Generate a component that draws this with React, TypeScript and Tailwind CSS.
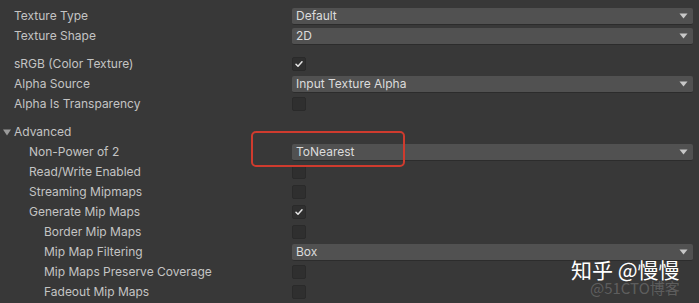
import React from "react";

type Row =
  | { kind: "dropdown"; label: string; value: string; indent: number; gapBefore?: boolean; highlight?: boolean }
  | { kind: "check"; label: string; checked: boolean; indent: number; gapBefore?: boolean }
  | { kind: "foldout"; label: string; gapBefore?: boolean };

const rows: Row[] = [
  { kind: "dropdown", label: "Texture Type", value: "Default", indent: 0 },
  { kind: "dropdown", label: "Texture Shape", value: "2D", indent: 0 },
  { kind: "check", label: "sRGB (Color Texture)", checked: true, indent: 0, gapBefore: true },
  { kind: "dropdown", label: "Alpha Source", value: "Input Texture Alpha", indent: 0 },
  { kind: "check", label: "Alpha Is Transparency", checked: false, indent: 0 },
  { kind: "foldout", label: "Advanced", gapBefore: true },
  { kind: "dropdown", label: "Non-Power of 2", value: "ToNearest", indent: 1, highlight: true },
  { kind: "check", label: "Read/Write Enabled", checked: false, indent: 1 },
  { kind: "check", label: "Streaming Mipmaps", checked: false, indent: 1 },
  { kind: "check", label: "Generate Mip Maps", checked: true, indent: 1 },
  { kind: "check", label: "Border Mip Maps", checked: false, indent: 2 },
  { kind: "dropdown", label: "Mip Map Filtering", value: "Box", indent: 2 },
  { kind: "check", label: "Mip Maps Preserve Coverage", checked: false, indent: 2 },
  { kind: "check", label: "Fadeout Mip Maps", checked: false, indent: 2 },
];

const indentClass = ["pl-[14px]", "pl-[29px]", "pl-[44px]"];

function Checkbox({ checked }: { checked: boolean }) {
  return (
    <div className="flex h-[14px] w-[14px] items-center justify-center rounded-[2px] border border-[#2a2a2a] bg-[#2f2f2f]">
      {checked && (
        <svg width="10" height="10" viewBox="0 0 10 10" fill="none">
          <path d="M2 5.2l2 2L8 2.8" stroke="#e6e6e6" strokeWidth="1.5" strokeLinecap="round" strokeLinejoin="round" />
        </svg>
      )}
    </div>
  );
}

function Dropdown({ value }: { value: string }) {
  return (
    <div className="flex h-[17px] w-[401px] items-center justify-between rounded-[2px] border-b border-[#2c2c2c] bg-[#515151] pl-[4px] pr-[5px]">
      <span className="text-[12px] leading-none text-[#dcdcdc]">{value}</span>
      <svg width="9" height="6" viewBox="0 0 9 6">
        <path d="M0.5 0.5h8L4.5 5.5z" fill="#c8c8c8" />
      </svg>
    </div>
  );
}

export default function App() {
  return (
    <div
      className="relative h-[303px] w-[699px] overflow-hidden bg-[#383838] pt-[6px] text-[12px] text-[#c4c4c4]"
      style={{ fontFamily: "Inter, 'Noto Sans', sans-serif" }}
    >
      {rows.map((row, i) => (
        <div key={i} className={`flex h-[20px] items-center ${row.gapBefore ? "mt-[8px]" : ""}`}>
          {row.kind === "foldout" ? (
            <div className="flex items-center pl-[3px]">
              <svg width="8" height="7" viewBox="0 0 8 7" className="mr-[3px]">
                <path d="M0 0.5h8L4 6.5z" fill="#9a9a9a" />
              </svg>
              <span>{row.label}</span>
            </div>
          ) : (
            <>
              <div className={`w-[292px] shrink-0 ${indentClass[row.indent]}`}>{row.label}</div>
              {row.kind === "dropdown" ? (
                <div className="relative">
                  <Dropdown value={row.value} />
                  {row.highlight && (
                    <div className="absolute left-[-41px] top-[-13px] h-[36px] w-[154px] rounded-[5px] border-2 border-[#cf3b2e]" />
                  )}
                </div>
              ) : (
                <Checkbox checked={row.checked} />
              )}
            </>
          )}
        </div>
      ))}

      <div
        className="absolute left-[571px] top-[259px] text-[21px] leading-none text-white"
        style={{ fontFamily: "'Noto Sans CJK SC', sans-serif" }}
      >
        知乎 @慢慢
      </div>
      <div
        className="absolute left-[590px] top-[280px] text-[15px] leading-none text-white/20"
        style={{ fontFamily: "'Noto Sans CJK SC', sans-serif" }}
      >
        @51CTO博客
      </div>
    </div>
  );
}
